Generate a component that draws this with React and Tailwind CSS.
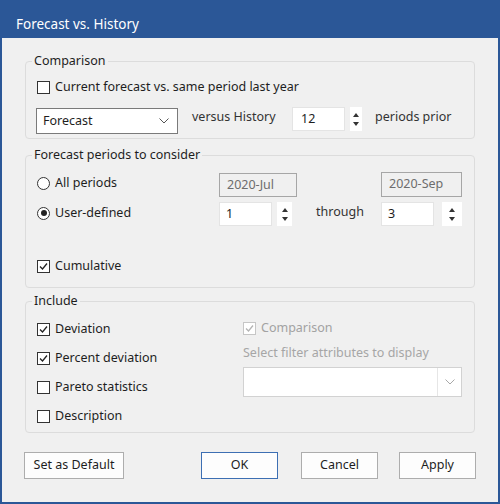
import React from 'react';

function Check({ checked, disabled }) {
  return (
    <span
      className={`w-[13px] h-[13px] shrink-0 border bg-white flex items-center justify-center ${
        disabled ? 'border-[#c6c6c6]' : 'border-[#333333]'
      }`}
    >
      {checked && (
        <svg width="11" height="11" viewBox="0 0 11 11">
          <path
            d="M2 5.5 L4.5 8 L9 2.5"
            fill="none"
            stroke={disabled ? '#b4b4b4' : '#222222'}
            strokeWidth="1.3"
          />
        </svg>
      )}
    </span>
  );
}

function Radio({ checked }) {
  return (
    <span className="w-[13px] h-[13px] shrink-0 rounded-full border border-[#333333] bg-white flex items-center justify-center">
      {checked && <span className="w-[6px] h-[6px] rounded-full bg-[#222222]" />}
    </span>
  );
}

function CheckRow({ label, checked, disabled, className = '' }) {
  return (
    <div className={`flex items-center h-[16px] ${className}`}>
      <Check checked={checked} disabled={disabled} />
      <span className={`ml-[5px] ${disabled ? 'text-[#a2a2a2] ml-[4px]' : ''}`}>{label}</span>
    </div>
  );
}

function Spinner({ className = '' }) {
  return (
    <div className={`h-[24px] bg-white flex flex-col items-center justify-center gap-[5px] ${className}`}>
      <svg width="6" height="4" viewBox="0 0 6 4">
        <path d="M0 4 L3 0 L6 4 Z" fill="#333333" />
      </svg>
      <svg width="6" height="4" viewBox="0 0 6 4">
        <path d="M0 0 L6 0 L3 4 Z" fill="#333333" />
      </svg>
    </div>
  );
}

function Chevron({ color = '#555555' }) {
  return (
    <svg width="10" height="6" viewBox="0 0 10 6">
      <path d="M0.5 0.5 L5 5 L9.5 0.5" fill="none" stroke={color} strokeWidth="1" />
    </svg>
  );
}

function Group({ title, children, className = '' }) {
  return (
    <fieldset className={`w-[450px] border border-[#dcdcdc] rounded-[4px] pl-[11px] ${className}`}>
      <legend className="h-[16px] leading-[16px] ml-[-5px] px-[2px] text-[#1e1e1e]">{title}</legend>
      {children}
    </fieldset>
  );
}

function Button({ children, primary, className = '' }) {
  return (
    <button
      className={`h-[27px] bg-[#fdfdfd] border text-[#1e1e1e] ${
        primary ? 'border-[#3d6fb3]' : 'border-[#adadad]'
      } ${className}`}
    >
      {children}
    </button>
  );
}

export default function App() {
  return (
    <div className="w-[500px] h-[504px] bg-[#2b5797] flex flex-col px-[2px] pb-[2px] font-['Noto_Sans',sans-serif] text-[12.5px] text-[#1e1e1e]">
      {/* Title bar */}
      <div className="h-[38px] shrink-0 pl-[14px] pt-[14px] text-[13.5px] leading-[20px] text-white">
        Forecast vs. History
      </div>

      {/* Body */}
      <div className="flex-1 bg-[#f0f0f0] pl-[23px] flex flex-col">
        <Group title="Comparison" className="mt-[15px] pb-[4px]">
          <CheckRow label="Current forecast vs. same period last year" className="mt-[10px]" />
          <div className="flex items-start h-[27px] mt-[12px]">
            <div className="ml-[-1px] mt-[1px] w-[142px] h-[26px] bg-white border border-[#7a7a7a] flex items-center justify-between pl-[6px] pr-[8px]">
              <span className="leading-[16px]">Forecast</span>
              <Chevron />
            </div>
            <span className="ml-[14px] w-[100px] mt-[2px] leading-[16px] text-[#333333]">versus History</span>
            <div className="w-[53px] h-[24px] bg-white border border-[#e4e4e4] flex items-center pl-[8px]">12</div>
            <Spinner className="ml-[5px] w-[12px]" />
            <span className="ml-[13px] mt-[2px] leading-[16px] text-[#333333]">periods prior</span>
          </div>
        </Group>

        <Group title="Forecast periods to consider" className="mt-[8px] pb-[13px]">
          <div className="grid grid-cols-[182px_78px_84px_81px] mt-[9px] h-[25px]">
            <div className="flex items-center gap-[5px] h-[16px] mt-[3px]">
              <Radio />
              <span>All periods</span>
            </div>
            <div className="mt-[1px] h-[24px] border border-[#a6a6a6] flex items-center pl-[7px] text-[#6d6d6d]">
              2020-Jul
            </div>
            <div />
            <div className="h-[25px] border border-[#a6a6a6] flex items-center pl-[7px] text-[#6d6d6d]">
              2020-Sep
            </div>
          </div>
          <div className="grid grid-cols-[182px_78px_84px_81px] mt-[4px] h-[25px]">
            <div className="flex items-center gap-[5px] h-[16px] mt-[4px]">
              <Radio checked />
              <span>User-defined</span>
            </div>
            <div className="flex mt-[1px]">
              <div className="w-[53px] h-[24px] bg-white border border-[#e4e4e4] flex items-center pl-[6px]">1</div>
              <Spinner className="ml-[5px] w-[15px]" />
            </div>
            <span className="pl-[19px] mt-[3px] leading-[16px] text-[#333333]">through</span>
            <div className="flex mt-[1px]">
              <div className="w-[53px] h-[24px] bg-white border border-[#e4e4e4] flex items-center pl-[6px]">3</div>
              <Spinner className="ml-[8px] w-[20px]" />
            </div>
          </div>
          <CheckRow label="Cumulative" checked className="mt-[32px]" />
        </Group>

        <Group title="Include" className="mt-[5px] pb-[8px]">
          <div className="flex">
            <div className="w-[206px] flex flex-col gap-[13px] mt-[12px]">
              <CheckRow label="Deviation" checked />
              <CheckRow label="Percent deviation" checked />
              <CheckRow label="Pareto statistics" />
              <CheckRow label="Description" />
            </div>
            <div className="flex flex-col mt-[11px]">
              <CheckRow label="Comparison" checked disabled />
              <span className="mt-[9px] h-[16px] leading-[16px] text-[#a6a6a6]">
                Select filter attributes to display
              </span>
              <div className="mt-[6px] w-[219px] h-[30px] bg-white border border-[#d2d2d2] flex">
                <div className="flex-1" />
                <div className="w-[24px] border-l border-[#e6e6e6] flex items-center justify-center">
                  <Chevron color="#a8a8a8" />
                </div>
              </div>
            </div>
          </div>
        </Group>

        <div className="flex mt-[19px] ml-[-1px]">
          <Button className="w-[100px]">Set as Default</Button>
          <Button primary className="w-[77px] ml-[77px]">OK</Button>
          <Button className="w-[77px] ml-[23px]">Cancel</Button>
          <Button className="w-[77px] ml-[21px]">Apply</Button>
        </div>
      </div>
    </div>
  );
}
